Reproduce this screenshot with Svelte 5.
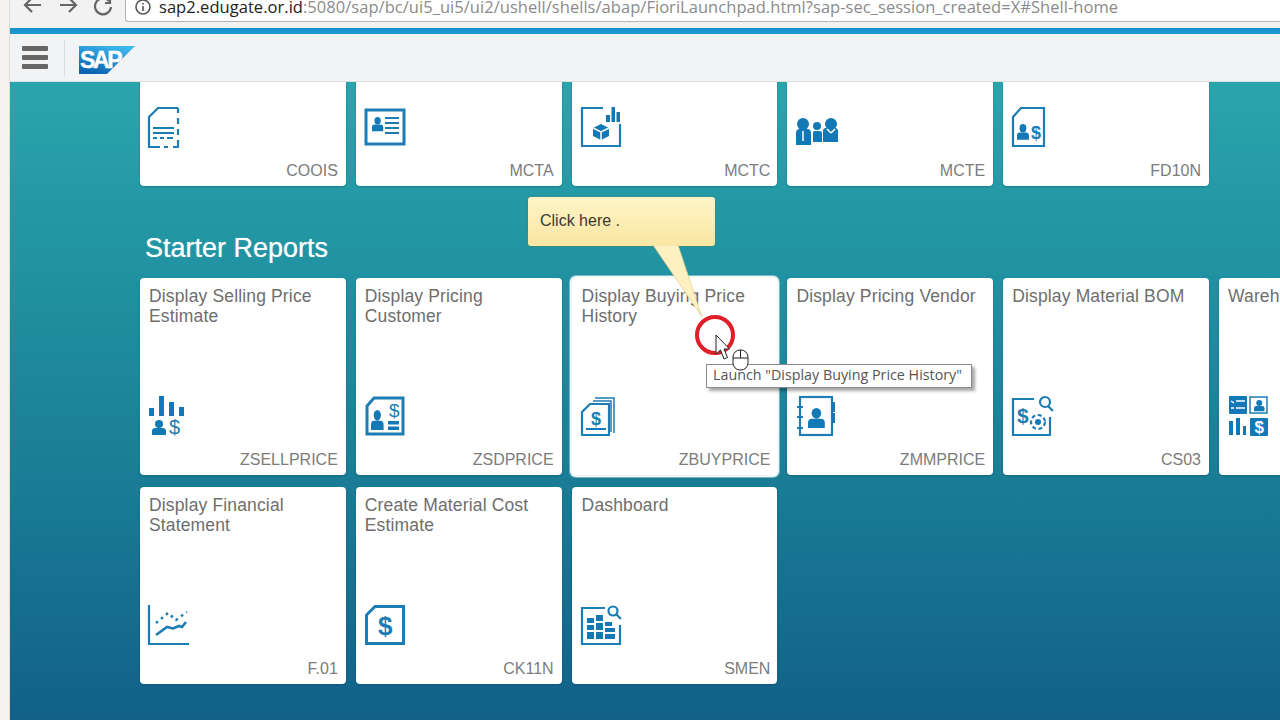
<script>
  const topTiles = [
    { code: "COOIS", icon: "coois" },
    { code: "MCTA", icon: "mcta" },
    { code: "MCTC", icon: "mctc" },
    { code: "MCTE", icon: "mcte" },
    { code: "FD10N", icon: "fd10n" }
  ];

  const reportTiles = [
    { title: "Display Selling Price Estimate", code: "ZSELLPRICE", icon: "zsell" },
    { title: "Display Pricing Customer", code: "ZSDPRICE", icon: "zsd" },
    { title: "Display Buying Price History", code: "ZBUYPRICE", icon: "zbuy", active: true },
    { title: "Display Pricing Vendor", code: "ZMMPRICE", icon: "zmm" },
    { title: "Display Material BOM", code: "CS03", icon: "cs03" },
    { title: "Warehouse Reports", code: "", icon: "ware" }
  ];

  const lastTiles = [
    { title: "Display Financial Statement", code: "F.01", icon: "f01" },
    { title: "Create Material Cost Estimate", code: "CK11N", icon: "ck11n" },
    { title: "Dashboard", code: "SMEN", icon: "smen" }
  ];
</script>

{#snippet person(x, y, sx, sy = sx)}
  <g transform="translate({x} {y}) scale({sx} {sy})">
    <circle cx="7" cy="4" r="4" />
    <path d="M0 15 V11 Q0 8 3.5 8 H10.5 Q14 8 14 11 V15 Z" />
  </g>
{/snippet}

{#snippet glyph(name)}
  <svg class="icon" viewBox="0 0 40 40" width="40" height="40" aria-hidden="true">
    {#if name === "coois"}
      <path class="ln" d="M29 1 H9 L0 10 V40 H11" />
      <path class="ln" d="M29 1 V6 M29 11 V17 M29 22 V28 M29 33 V40 H24 M19 40 H15" />
      <path class="ln" d="M4 21 H25 M4 26 H25 M4 31 H8 M11 31 H15 M18 31 H24" />
    {:else if name === "mcta"}
      <rect class="ln heavy" x="1" y="3" width="38" height="34" />
      {@render person(7, 10, 0.8, 0.95)}
      <path class="ln" d="M20 11 H34 M20 16 H34 M20 21 H34 M20 26 H34" />
    {:else if name === "mctc"}
      <path class="ln" d="M22 1 H1 V39 H39 V17" />
      <path d="M25 8 H29 V15 H25 Z M30.500 0 H34 V15 H30.500 Z M35.500 5 H39 V15 H35.500 Z" />
      <path d="M20 17 L28 21 V29 L20 33 L12 29 V21 Z" />
      <path class="cut" d="M12 21 L20 25 L28 21 M20 25 V33" />
    {:else if name === "mcte"}
      <circle cx="7" cy="17" r="6" />
      <path d="M0 38 V26 Q0 22 4 22 H11 Q15 22 15 26 V38 Z" />
      <path class="cut" d="M7 24 V34" />
      <circle cx="21" cy="19" r="4" />
      <path d="M17 35 V26 Q17 24 19 24 H23 Q26 24 26 26 V35 Z" />
      <circle cx="35" cy="17" r="6" />
      <path d="M27 35 V24 Q27 21 30 21 H39 Q42 21 42 24 V35 Z" />
      <path class="cut" d="M35 26 L31 22 M35 26 L39 22" />
    {:else if name === "fd10n"}
      <path class="ln" d="M9 1 H32 V39 H1 V10 Z" />
      {@render person(5, 17, 0.85, 1.05)}
      <text x="19" y="32" class="sign" font-size="18">$</text>
    {:else if name === "zsell"}
      <path d="M0 12 H5 V20 H0 Z M10 0 H15 V20 H10 Z M20 6 H25 V20 H20 Z M30 11 H35 V20 H30 Z" />
      {@render person(3, 24, 1)}
      <text x="20" y="38" class="sign light" font-size="20">$</text>
    {:else if name === "zsd"}
      <path class="ln heavy" d="M9 2 H38 V38 H2 V10 Z" />
      {@render person(6, 14, 0.9, 1.33)}
      <text x="24" y="21" class="sign light" font-size="19">$</text>
      <path d="M23 25 H34 V28.500 H23 Z M23 30.500 H34 V34 H23 Z" />
    {:else if name === "zbuy"}
      <path class="ln" d="M9 8 H28 V39 H1 V16 Z" />
      <path class="ln thin" d="M12 5 H30 V36 M14 2 H33 V37" />
      <text x="10" y="29" class="sign" font-size="18">$</text>
      <path d="M5 32 H25 V34 H5 Z" />
    {:else if name === "zmm"}
      <rect class="ln" x="4" y="1" width="32" height="38" />
      <path d="M36 6 H39 V16 H36 Z M36 17 H39 V27 H36 Z" />
      <path class="ln" d="M1 11 H7 M1 21 H7 M1 32 H7" />
      {@render person(12, 12, 1.2, 1.33)}
    {:else if name === "cs03"}
      <path class="ln" d="M22 3 H1 V39 H38 V21" />
      <text x="5" y="27" class="sign" font-size="21">$</text>
      <circle class="ln dash" cx="26" cy="26" r="7" />
      <circle cx="26" cy="26" r="3" />
      <circle class="ln" cx="33" cy="6" r="5" />
      <path class="ln" d="M36 10 L41 15" />
    {:else if name === "ware"}
      <rect x="1" y="0" width="18" height="18" rx="1" />
      <path class="cut" d="M8 5 H17 M8 12 H17 M3 5 L6 7 M3 12 H6" />
      <rect class="ln thin" x="22" y="1" width="17" height="16" />
      {@render person(26, 4, 0.75)}
      <path d="M1 25 H5 V39 H1 Z M8 22 H12 V39 H8 Z M15 30 H18 V39 H15 Z" />
      <rect x="22" y="22" width="18" height="18" rx="1" />
      <text x="26.500" y="37" class="sign rev" font-size="17">$</text>
    {:else if name === "f01"}
      <path class="ln" d="M0 0 V39 H40" />
      <path class="ln wide" d="M7 30 L18 22 L24 23.500 L30 21 L33 22 L37 17" />
      <path class="ln dotted" d="M7 18 L19 8 L27 15 L38 7" />
    {:else if name === "ck11n"}
      <path class="ln heavy" d="M10 1.500 H38.500 V38.500 H1.500 V10 Z" />
      <text x="13" y="30" class="sign" font-size="26">$</text>
    {:else if name === "smen"}
      <path class="ln" d="M24 3 H1 V39 H39 V20" />
      <path d="M6 13 H13 V18 H6 Z M6 20 H13 V25 H6 Z M6 27 H13 V34 H6 Z M15 10 H22 V16 H15 Z M15 18 H22 V25 H15 Z M15 27 H22 V34 H15 Z M24 17 H31 V21 H24 Z M24 23 H34 V27 H24 Z M24 29 H34 V34 H24 Z" />
      <circle class="ln" cx="32" cy="6" r="4.5" />
      <path class="ln" d="M35 9 L40 14" />
    {/if}
  </svg>
{/snippet}

{#snippet tile(item)}
  <div class="tile" class:active={item.active}>
    {#if item.title}<div class="title">{item.title}</div>{/if}
    {@render glyph(item.icon)}
    <div class="code">{item.code}</div>
  </div>
{/snippet}

<div class="page">
  <div class="strip"></div>
  <div class="window">
    <div class="toolbar">
      <div class="nav">
        <svg viewBox="0 0 20 20" width="20" height="20"><path d="M18 7 H3 M9 0 L2 7 L9 14" /></svg>
        <svg viewBox="0 0 20 20" width="20" height="20"><path d="M2 7 H17 M11 0 L18 7 L11 14" /></svg>
        <svg viewBox="0 0 20 20" width="20" height="20"><path d="M16 3 A8 8 0 1 0 18 9 M17 0 V5 H12" /></svg>
      </div>
      <div class="url">
        <svg viewBox="0 0 16 16" width="16" height="16"><circle cx="8" cy="8" r="7" /><path d="M8 7 V12 M8 4 V5.500" /></svg>
        <span class="host">sap2.edugate.or.id</span><span class="rest">:5080/sap/bc/ui5_ui5/ui2/ushell/shells/abap/FioriLaunchpad.html?sap-sec_session_created=X#Shell-home</span>
      </div>
    </div>
    <div class="accent"></div>
    <header class="shell">
      <div class="burger"><i></i><i></i><i></i></div>
      <div class="logo">
        <svg viewBox="0 0 56 28" width="56" height="28">
          <defs>
            <linearGradient id="sapblue" x1="0.7" y1="0" x2="0.2" y2="1">
              <stop offset="0" stop-color="#3cb8ee" />
              <stop offset="1" stop-color="#0a5fae" />
            </linearGradient>
          </defs>
          <polygon points="0,0 56,0 28,28 0,28" fill="url(#sapblue)" />
          <text x="1" y="22" class="saptext">SAP</text>
        </svg>
      </div>
    </header>
    <main class="content">
      <div class="row first">
        {#each topTiles as item}
          {@render tile(item)}
        {/each}
      </div>
      <h2>Starter Reports</h2>
      <div class="row">
        {#each reportTiles as item}
          {@render tile(item)}
        {/each}
      </div>
      <div class="row">
        {#each lastTiles as item}
          {@render tile(item)}
        {/each}
      </div>
    </main>
  </div>

  <div class="callout">Click here .</div>
  <svg class="tail" viewBox="0 0 60 80" width="60" height="80"><polygon points="1,0 26,0 50,72" /></svg>
  <div class="hint">Launch "Display Buying Price History"</div>
  <svg class="ring" viewBox="0 0 44 44" width="44" height="44"><circle cx="22" cy="22" r="18" /></svg>
  <svg class="pointer" viewBox="0 0 40 40" width="40" height="40">
    <path class="arrow" d="M1 1 V20 L5.500 16 L9 25 L12.500 23.500 L9 15 H14.500 Z" />
    <rect class="arrow" x="18" y="16" width="15" height="20" rx="7" />
    <path class="arrow" d="M18 24 H33 M25.500 16 V24" />
  </svg>
</div>

<style>
  :global(body) {
    overflow: hidden;
    font-family: "Liberation Sans", Arial, sans-serif;
  }

  .page {
    display: flex;
    position: relative;
    width: 1280px;
    height: 720px;
    overflow: hidden;
    background: #f2f2f0;
  }

  .strip {
    flex: 0 0 10px;
    background: #f4f3ef;
    border-right: 1px solid #dcdcd8;
    box-sizing: border-box;
  }

  .window {
    flex: 1;
    min-width: 0;
    display: flex;
    flex-direction: column;
  }

  .toolbar {
    flex: 0 0 28px;
    display: flex;
    align-items: flex-start;
    background: #f2f2f2;
    overflow: hidden;
  }

  .nav {
    flex: 0 0 115px;
    display: flex;
    gap: 15px;
    padding-left: 13px;
    margin-top: -2px;
    box-sizing: border-box;
  }

  .nav svg {
    fill: none;
    stroke: #666;
    stroke-width: 2.2;
  }

  .url {
    flex: 1;
    height: 28px;
    margin-top: -6px;
    display: flex;
    align-items: center;
    gap: 8px;
    padding: 0 0 3px 9px;
    background: #fff;
    border: 1px solid #b4b4b4;
    border-right: 0;
    border-radius: 0 0 0 3px;
    box-sizing: border-box;
    font-family: "Open Sans", sans-serif;
    font-size: 16.500px;
    letter-spacing: 0.04px;
    white-space: nowrap;
  }

  .url svg {
    flex: none;
    fill: none;
    stroke: #555;
    stroke-width: 1.6;
  }

  .host {
    color: #222;
  }

  .rest {
    margin-left: -8px;
    color: #8b8b8b;
  }

  .accent {
    flex: 0 0 6px;
    background: linear-gradient(#1a8fc9, #1b9bd0);
  }

  .shell {
    flex: 0 0 48px;
    display: flex;
    align-items: center;
    background: #f2f3f5;
    border-bottom: 1px solid #dedede;
    box-sizing: border-box;
  }

  .burger {
    display: flex;
    flex-direction: column;
    gap: 4px;
    padding: 0 16px 0 12px;
    height: 36px;
    justify-content: center;
    border-right: 1px solid #dcdcdc;
  }

  .burger i {
    display: block;
    width: 26px;
    height: 5px;
    border-radius: 1px;
    background: #666;
  }

  .logo {
    display: flex;
    padding-left: 14px;
    padding-top: 4px;
  }

  .saptext {
    font: bold 23px "Liberation Sans", sans-serif;
    letter-spacing: -2.300px;
    fill: #fff;
    stroke: #fff;
    stroke-width: 0.4;
  }

  .content {
    flex: 1;
    min-height: 0;
    overflow: hidden;
    padding-left: 130px;
    background: linear-gradient(#2aa5ad, #2295a3 25%, #1a7d95 62%, #12608a);
  }

  .row {
    display: flex;
    gap: 10px;
    margin-bottom: 12px;
  }

  .row.first {
    margin-top: -93px;
    margin-bottom: 0;
  }

  .first .icon {
    margin-bottom: 1px;
  }

  .first .code {
    margin-top: 14px;
  }

  h2 {
    height: 92px;
    margin: 0;
    padding: 48px 0 0 5px;
    box-sizing: border-box;
    color: #fff;
    font-size: 27px;
    font-weight: 400;
    line-height: 28px;
    text-shadow: 0 0 1px rgba(255, 255, 255, 0.6);
  }

  .tile {
    position: relative;
    flex: 0 0 205.800px;
    height: 197px;
    display: flex;
    flex-direction: column;
    padding: 8px 9px 6px;
    box-sizing: border-box;
    background: #fff;
    border-radius: 4px;
    box-shadow: 0 1px 2px rgba(0, 50, 70, 0.3);
  }

  .tile:nth-child(3) {
    padding-left: 10px;
  }

  .tile:nth-child(3) .code {
    margin-right: -2px;
  }

  .tile.active {
    box-shadow: 0 0 0 2px #f1f8fa, 0 0 0 3px rgba(255, 255, 255, 0.4);
  }

  .title {
    color: #6e6e6e;
    font-size: 17.500px;
    letter-spacing: 0.15px;
    line-height: 20px;
  }

  .code {
    height: 18px;
    margin-top: 15px;
    text-align: right;
    color: #7c7c7c;
    font-size: 16px;
    line-height: 18px;
    margin-right: -1px;
    white-space: nowrap;
  }

  .icon {
    flex: none;
    margin-top: auto;
    fill: #1279b6;
    overflow: visible;
  }

  .tile:nth-child(3) .icon {
    margin-left: -1px;
  }

  .ln {
    fill: none;
    stroke: #1c7cb4;
    stroke-width: 2.200;
  }

  .thin {
    stroke-width: 1.500;
  }

  .wide {
    stroke-width: 2.600;
  }

  .heavy {
    stroke-width: 3;
  }

  .dash {
    stroke-dasharray: 4 2.500;
  }

  .dotted {
    stroke-dasharray: 2.500 4;
    stroke-width: 2.500;
  }

  .cut {
    fill: none;
    stroke: #fff;
    stroke-width: 1.500;
  }

  .sign {
    font-family: "Liberation Sans", sans-serif;
    font-weight: 700;
    fill: #1c7cb4;
  }

  .sign.light {
    font-weight: 400;
  }

  .sign.rev {
    fill: #fff;
  }

  .callout {
    position: absolute;
    left: 528px;
    top: 197px;
    width: 187px;
    height: 49px;
    padding-left: 12px;
    display: flex;
    align-items: center;
    padding-bottom: 2px;
    box-sizing: border-box;
    border-radius: 3px;
    background: linear-gradient(#fdf4c6, #fbe6a2);
    box-shadow: 0 0 2px rgba(120, 110, 60, 0.7);
    color: #3a3a30;
    font-size: 16px;
  }

  .tail {
    position: absolute;
    left: 652px;
    top: 245px;
  }

  .tail polygon {
    fill: #fdf1c2;
    stroke: #e0cc8a;
    stroke-width: 0.7;
  }

  .hint {
    position: absolute;
    left: 706px;
    top: 364px;
    width: 266px;
    height: 24px;
    box-sizing: border-box;
    padding-left: 6px;
    background: #fff;
    border: 1px solid #8c8c8c;
    box-shadow: 3px 3px 3px rgba(0, 0, 0, 0.35);
    color: #555;
    font-family: "Open Sans", sans-serif;
    font-size: 14.300px;
    line-height: 20px;
    white-space: nowrap;
  }

  .ring {
    position: absolute;
    left: 693px;
    top: 313px;
  }

  .ring circle {
    fill: none;
    stroke: #e11e27;
    stroke-width: 4;
  }

  .pointer {
    position: absolute;
    left: 715px;
    top: 334px;
  }

  .arrow {
    fill: #fff;
    stroke: #222;
    stroke-width: 1;
  }
</style>
